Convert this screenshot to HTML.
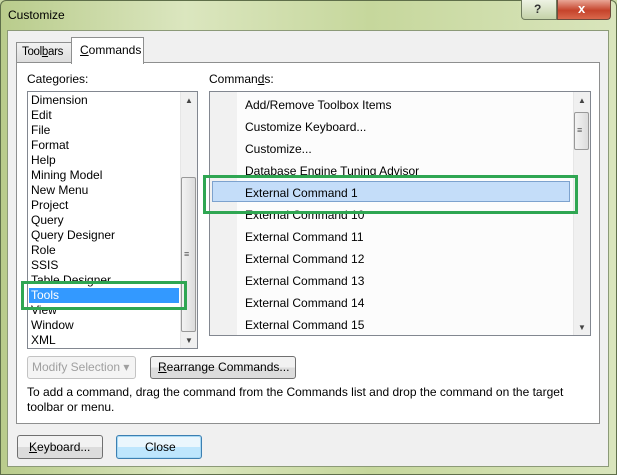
<!DOCTYPE html><html><head><style>
*{margin:0;padding:0;box-sizing:border-box}
body{width:617px;height:475px;overflow:hidden;background:#c9d8a4;font-family:"Liberation Sans",sans-serif;font-size:12px;color:#000;position:relative}
.a{position:absolute}
.t{position:absolute;white-space:nowrap;line-height:14px}
</style></head><body>
<div class="a" style="left:0;top:0;width:617px;height:475px;background:linear-gradient(90deg,#b9cc8c,#dbe6bf 30%,#c6d79c 60%,#d9e5bc);border:1px solid #5f6f4a;border-radius:6px 6px 0 0"></div>
<div class="t" style="left:8px;top:8px">Customize</div>
<div class="a" style="left:521px;top:0;width:36px;height:20px;border:1px solid #6d7a5c;border-top:none;border-radius:0 0 0 4px;background:linear-gradient(#eef3e4,#c4d2a8)"></div>
<div class="t" style="left:534px;top:2px;color:#333;font-weight:bold">?</div>
<div class="a" style="left:557px;top:0;width:54px;height:20px;border:1px solid #6d4a3c;border-top:none;border-radius:0 0 4px 0;background:linear-gradient(#e9a696,#c5432b 55%,#d9684c)"></div>
<div class="t" style="left:578px;top:2px;color:#fff;font-weight:bold;font-size:13px">x</div>
<div class="a" style="left:7px;top:30px;width:602px;height:437px;background:#f0f0f0;border:1px solid #8c9a78"></div>
<!-- tabs -->
<div class="a" style="left:16px;top:42px;width:56px;height:21px;border:1px solid #8e8f8f;border-bottom:none;background:linear-gradient(#f2f2f2,#dcdcdc)"></div>
<div class="t" style="left:22px;top:45px;font-size:11.5px;letter-spacing:-0.3px"><span>Tool<u>b</u>ars</span></div>
<div class="a" style="left:16px;top:62px;width:584px;height:362px;border:1px solid #8e8f8f;background:#fff"></div>
<div class="a" style="left:71px;top:37px;width:73px;height:27px;border:1px solid #8e8f8f;border-bottom:none;background:#fff"></div>
<div class="t" style="left:80px;top:43px"><u>C</u>ommands</div>
<div class="t" style="left:27px;top:72px">Cate<u>g</u>ories:</div>
<div class="t" style="left:209px;top:72px">Comman<u>d</u>s:</div>
<!-- left list -->
<div class="a" style="left:27px;top:91px;width:171px;height:258px;border:1px solid #828790;background:#fff;overflow:hidden">
<div class="a" style="left:152px;top:0;width:17px;height:256px;background:#f0f0f0;border-left:1px solid #e6e6e6"></div>
<div class="t" style="left:157px;top:2px;font-size:8px;color:#444">▲</div>
<div class="t" style="left:157px;top:242px;font-size:8px;color:#444">▼</div>
<div class="a" style="left:153px;top:85px;width:15px;height:155px;border:1px solid #999;border-radius:2px;background:linear-gradient(90deg,#f3f3f3,#dcdcdc)"></div>
<div class="t" style="left:156px;top:155px;font-size:9px;color:#555">≡</div>
<div class="a" style="left:1px;top:196px;width:150px;height:15px;background:#3399ff"></div>
<div style="position:absolute;left:3px;top:1px;line-height:15px">
Dimension<br>Edit<br>File<br>Format<br>Help<br>Mining Model<br>New Menu<br>Project<br>Query<br>Query Designer<br>Role<br>SSIS<br>Table Designer<br><span style="color:#fff">Tools</span><br>View<br>Window<br>XML</div>
</div>
<div class="a" style="left:21px;top:281px;width:166px;height:29px;border:3px solid #2fa652"></div>
<!-- right list -->
<div class="a" style="left:209px;top:91px;width:382px;height:245px;border:1px solid #828790;background:#fcfcfc;overflow:hidden">
<div class="a" style="left:0;top:0;width:27px;height:245px;background:#f1f1f1"></div>
<div class="a" style="left:363px;top:0;width:17px;height:243px;background:#f0f0f0;border-left:1px solid #e6e6e6"></div>
<div class="t" style="left:368px;top:2px;font-size:8px;color:#444">▲</div>
<div class="t" style="left:368px;top:229px;font-size:8px;color:#444">▼</div>
<div class="a" style="left:364px;top:20px;width:15px;height:38px;border:1px solid #999;border-radius:2px;background:linear-gradient(90deg,#f3f3f3,#dcdcdc)"></div>
<div class="t" style="left:367px;top:31px;font-size:9px;color:#555">≡</div>
<div class="a" style="left:2px;top:89px;width:358px;height:21px;background:#c4ddf9;border:1px solid #7da2ce"></div>
<div style="position:absolute;left:35px;top:2px;line-height:22px">Add/Remove Toolbox Items<br>Customize Keyboard...<br>Customize...<br>Database Engine Tuning Advisor<br>External Command 1<br>External Command 10<br>External Command 11<br>External Command 12<br>External Command 13<br>External Command 14<br>External Command 15</div>
</div>
<div class="a" style="left:203px;top:175px;width:375px;height:39px;border:3px solid #2fa652"></div>
<!-- buttons -->
<div class="a" style="left:27px;top:356px;width:109px;height:23px;border:1px solid #c3c3c3;border-radius:3px;background:#f4f4f4"></div>
<div class="t" style="left:32px;top:360px;color:#a0a0a0">Modify Selection ▾</div>
<div class="a" style="left:150px;top:356px;width:146px;height:23px;border:1px solid #707070;border-radius:3px;background:linear-gradient(#f2f2f2 50%,#dcdcdc 50%)"></div>
<div class="t" style="left:158px;top:360px"><u>R</u>earrange Commands...</div>
<div class="t" style="left:27px;top:385px">To add a command, drag the command from the Commands list and drop the command on the target</div>
<div class="t" style="left:27px;top:400px">toolbar or menu.</div>
<div class="a" style="left:17px;top:435px;width:86px;height:24px;border:1px solid #707070;border-radius:3px;background:linear-gradient(#f2f2f2 50%,#dcdcdc 50%)"></div>
<div class="t" style="left:29px;top:440px"><u>K</u>eyboard...</div>
<div class="a" style="left:116px;top:435px;width:86px;height:24px;border:1px solid #3c7fb1;border-radius:3px;background:linear-gradient(#eaf6fd 50%,#bee6fd 50%);box-shadow:inset 0 0 0 1px #a7d9f5"></div>
<div class="t" style="left:145px;top:440px">Close</div>
</body></html>
